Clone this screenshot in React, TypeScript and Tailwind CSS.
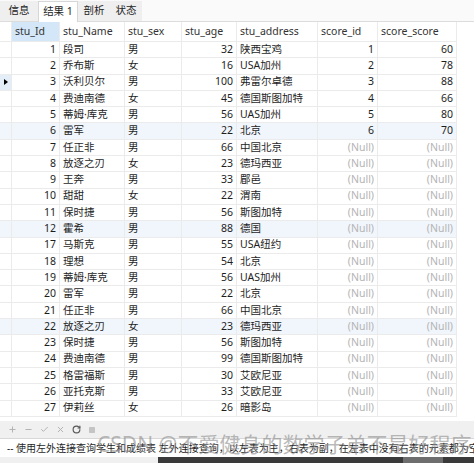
import { Plus, Minus, Check, X, RotateCw, Square } from "lucide-react";

type Row = [number, string, string, number, string, number | null, number | null];

const rows: Row[] = [
  [1, "段司", "男", 32, "陕西宝鸡", 1, 60],
  [2, "乔布斯", "女", 16, "USA加州", 2, 78],
  [3, "沃利贝尔", "男", 100, "弗雷尔卓德", 3, 88],
  [4, "费迪南德", "女", 45, "德国斯图加特", 4, 66],
  [5, "蒂姆·库克", "男", 56, "UAS加州", 5, 80],
  [6, "雷军", "男", 22, "北京", 6, 70],
  [7, "任正非", "男", 66, "中国北京", null, null],
  [8, "放逐之刃", "女", 23, "德玛西亚", null, null],
  [9, "王奔", "男", 33, "郿邑", null, null],
  [10, "甜甜", "女", 22, "渭南", null, null],
  [11, "保时捷", "男", 56, "斯图加特", null, null],
  [12, "霍希", "男", 88, "德国", null, null],
  [17, "马斯克", "男", 55, "USA纽约", null, null],
  [18, "理想", "男", 54, "北京", null, null],
  [19, "蒂姆·库克", "男", 56, "UAS加州", null, null],
  [20, "雷军", "男", 22, "北京", null, null],
  [21, "任正非", "男", 66, "中国北京", null, null],
  [22, "放逐之刃", "女", 23, "德玛西亚", null, null],
  [23, "保时捷", "男", 56, "斯图加特", null, null],
  [24, "费迪南德", "男", 99, "德国斯图加特", null, null],
  [25, "格雷福斯", "男", 30, "艾欧尼亚", null, null],
  [26, "亚托克斯", "男", 33, "艾欧尼亚", null, null],
  [27, "伊莉丝", "女", 26, "暗影岛", null, null],
];

const headers = ["stu_Id", "stu_Name", "stu_sex", "stu_age", "stu_address", "score_id", "score_score"];

const cols = "grid grid-cols-[12px_48px_65px_57px_55px_81px_60px_79px] w-[457px]";
const cell = "border-r border-b border-[#ebebeb] px-[3px] whitespace-nowrap overflow-hidden flex items-center";

function Num({ v }: { v: number | null }) {
  return (
    <div className={`${cell} justify-end`}>
      {v === null ? <span className="text-[#b4b4b4]">(Null)</span> : v}
    </div>
  );
}

export default function App() {
  return (
    <div
      className="relative w-[474px] h-[463px] overflow-hidden bg-white flex flex-col text-[10.5px] text-[#1e1e1e]"
      style={{ fontFamily: '"Noto Sans", "Noto Sans CJK SC", sans-serif' }}
    >
      {/* tabs */}
      <div className="h-[22px] flex items-end bg-[#fafafa] border-b border-[#dcdcdc] shrink-0">
        <div className="h-[20px] w-[38px] flex items-center justify-center bg-[#efefef]">信息</div>
        <div className="h-[21px] w-[40px] flex items-center justify-center bg-white border-x border-t border-[#d6d6d6] -mb-px">
          结果 1
        </div>
        <div className="h-[20px] w-[32px] flex items-center justify-center bg-[#efefef]">剖析</div>
        <div className="h-[20px] w-[32px] flex items-center justify-center bg-[#efefef]">状态</div>
      </div>

      {/* grid */}
      <div className="flex-1 flex flex-col">
        <div className={`${cols} h-[20px]`}>
          <div className={cell}></div>
          {headers.map((h, i) => (
            <div key={h} className={`${cell} ${i === 0 ? "bg-[#d3e7f8]" : "bg-white"} text-[#333]`}>
              {h}
            </div>
          ))}
        </div>
        {rows.map((r, i) => {
          const bg = i % 6 === 5 ? "bg-[#f1f6fc]" : "bg-white";
          return (
            <div key={r[0]} className={`${cols} h-[16.3px] ${bg}`}>
              <div className={`${cell} justify-center ${i === 2 ? "bg-[#e3eef9]" : ""}`}>
                {i === 2 && (
                  <span className="w-0 h-0 border-y-[3.5px] border-y-transparent border-l-[4px] border-l-black"></span>
                )}
              </div>
              <Num v={r[0]} />
              <div className={cell}>{r[1]}</div>
              <div className={cell}>{r[2]}</div>
              <Num v={r[3]} />
              <div className={cell}>{r[4]}</div>
              <Num v={r[5]} />
              <Num v={r[6]} />
            </div>
          );
        })}
      </div>

      {/* toolbar */}
      <div className="h-[17px] shrink-0 bg-[#f0f0f0] flex items-center gap-[7px] pl-[8px] text-[#b0b0b0]">
        <Plus size={9} strokeWidth={2.5} />
        <Minus size={9} strokeWidth={2.5} />
        <Check size={9} strokeWidth={2.5} />
        <X size={9} strokeWidth={2.5} />
        <RotateCw size={9} strokeWidth={3} className="text-[#555]" />
        <Square size={8} strokeWidth={0} fill="#c4c4c4" />
      </div>

      {/* status */}
      <div className="h-[19px] shrink-0 border-t border-[#d8d8d8] bg-white flex items-center pl-[7px] whitespace-nowrap overflow-hidden text-[10px]">
        -- 使用左外连接查询学生和成绩表 左外连接查询，以左表为主，右表为副，在左表中没有右表的元素都为空
      </div>

      <div className="h-[6px] shrink-0 flex">
        <div className="w-[158px] bg-[#f0f0f0]"></div>
        <div className="w-[245px] bg-[#3a3a3a]"></div>
        <div className="w-[40px] bg-[#6e6e6e]"></div>
        <div className="flex-1 bg-[#3a3a3a]"></div>
      </div>

      {/* watermark */}
      <div className="absolute left-[97px] top-[434px] text-[21px] leading-none text-[#8c8c8c]/60 whitespace-nowrap pointer-events-none">
        CSDN @不爱健身的数学子弟不是好程序员
      </div>
    </div>
  );
}
